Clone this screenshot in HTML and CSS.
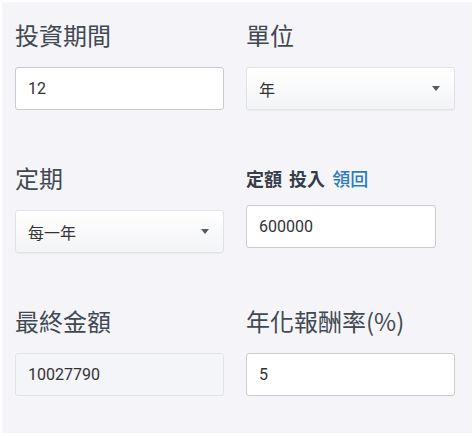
FILE: index.html
```html
<!DOCTYPE html>
<html lang="zh-Hant">
<head>
<meta charset="UTF-8">
<meta name="viewport" content="width=device-width, initial-scale=1.0">
<title>投資計算</title>
<link rel="stylesheet" href="styles.css">
</head>
<body>

<div class="panel">
    <div class="row">
        <div class="field">
            <label for="period">投資期間</label>
            <input type="text" id="period" value="12">
        </div>
        <div class="field">
            <label for="unit">單位</label>
            <div class="select-wrap">
                <select id="unit">
                    <option>年</option>
                    <option>月</option>
                </select>
            </div>
        </div>
    </div>

    <div class="row">
        <div class="field">
            <label for="freq">定期</label>
            <div class="select-wrap">
                <select id="freq">
                    <option>每一年</option>
                    <option>每一月</option>
                </select>
            </div>
        </div>
        <div class="field">
            <label for="amount" class="label-small">定額 投入 <a href="#" class="link">領回</a></label>
            <input type="text" id="amount" class="input-short" value="600000">
        </div>
    </div>

    <div class="row">
        <div class="field">
            <label for="total">最終金額</label>
            <input type="text" id="total" value="10027790" readonly>
        </div>
        <div class="field">
            <label for="rate">年化報酬率(%)</label>
            <input type="text" id="rate" value="5">
        </div>
    </div>
</div>

</body>
</html>
```

FILE: styles.css
```css
body {
    margin: 0;
    background-color: #fff;
    font-family: "Noto Sans CJK TC", sans-serif;
}
.panel {
    margin: 2px 2px 3px;
    height: 431px;
    box-sizing: border-box;
    padding: 15px 0 0 13px;
    background-color: #f5f5f9;
    display: flex;
    flex-direction: column;
    gap: 50px;
}
.row {
    display: grid;
    grid-template-columns: 209px 209px;
    column-gap: 22px;
}
.field {
    display: flex;
    flex-direction: column;
}
label {
    font-size: 24px;
    line-height: 36px;
    color: #424852;
    margin-bottom: 14px;
}
.label-small {
    font-size: 18px;
    font-weight: 700;
    color: #363d49;
    word-spacing: 3px;
    margin-bottom: 9px;
}
.link {
    color: #2d7cbf;
    font-weight: 500;
    text-decoration: none;
}
input[type="text"], select {
    box-sizing: border-box;
    width: 100%;
    height: 43px;
    padding: 0 12px;
    border: 1px solid #c9cbd0;
    border-radius: 3px;
    background-color: #fff;
    font-family: Roboto, "Noto Sans CJK TC", sans-serif;
    font-size: 16px;
    color: #333;
    outline: none;
}
input[readonly] {
    background-color: #f4f5f8;
    border-color: #e1e3e7;
}
.input-short {
    width: 190px !important;
}
.select-wrap {
    position: relative; /* reference for the arrow */
}
select {
    appearance: none;
    -webkit-appearance: none;
    border-color: #e0e2e6;
    background: linear-gradient(#fff, #f3f4f6);
    box-shadow: 0 1px 1px rgba(0, 0, 0, 0.04);
    font-family: "Noto Sans CJK TC", sans-serif;
}
/* dropdown arrow */
.select-wrap::after {
    content: "";
    position: absolute;
    right: 15px;
    top: 19px;
    border-left: 4px solid transparent;
    border-right: 4px solid transparent;
    border-top: 5px solid #555a63;
    pointer-events: none;
}
```
